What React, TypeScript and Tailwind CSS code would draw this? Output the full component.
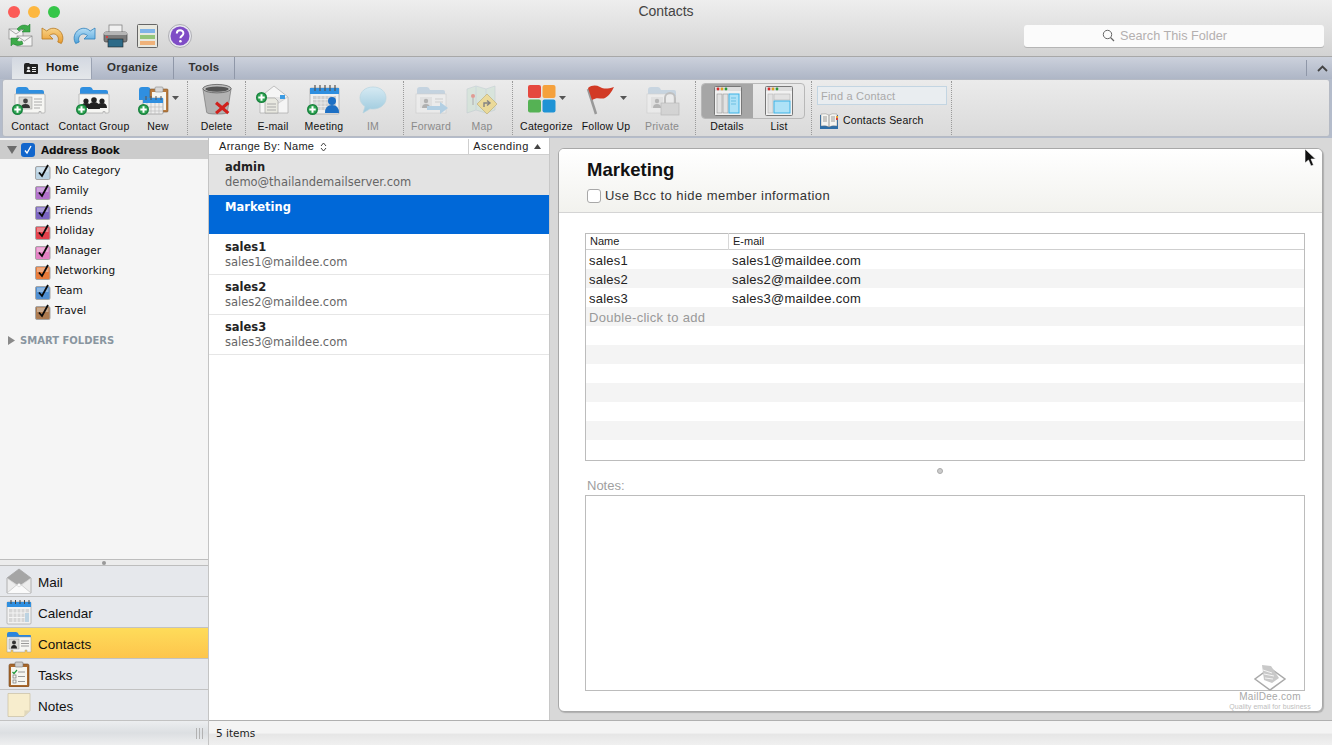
import React from "react";

const Plus = ({ x = 1, y = 21 }: { x?: number; y?: number }) => (
  <g transform={`translate(${x} ${y})`}>
    <circle cx="5.5" cy="5.5" r="5.5" fill="#17813d" />
    <circle cx="5.5" cy="5.5" r="4.2" fill="#2fa653" />
    <path d="M5.5 2.3v6.4M2.3 5.5h6.4" stroke="#fff" strokeWidth="2" />
  </g>
);

const Folder = ({ children }: { children?: React.ReactNode }) => (
  <>
    <path d="M4 6q0-3 3-3h7q2 0 3 3h13q2 0 2 2v4H4z" fill="#2f8fe0" />
    <path d="M3 10h29a1 1 0 0 1 1 1v17a1 1 0 0 1-1 1H29v-1.5h-2V29H10v-1.5H8V29H4a1 1 0 0 1-1-1V11a1 1 0 0 1 0-1z" fill="#f6f6f3" stroke="#a8a8a8" strokeWidth=".7" />
    {children}
  </>
);

const ContactIcon = () => (
  <svg width="36" height="32" viewBox="0 0 36 32">
    <Folder>
      <rect x="7" y="13" width="13" height="12" fill="#d8d8d4" stroke="#999" strokeWidth=".5" />
      <circle cx="13.5" cy="17" r="2.4" fill="#444" />
      <path d="M9 24q0-4 4.500-4t4.500 4z" fill="#333" />
      <path d="M22 15h8M22 18h8M22 21h8M22 24h6" stroke="#aaa" strokeWidth="1" />
    </Folder>
    <Plus x={0} y={20} />
  </svg>
);

const GroupIcon = () => (
  <svg width="36" height="32" viewBox="0 0 36 32">
    <Folder>
      <g fill="#222">
        <circle cx="10" cy="17" r="2.600" />
        <circle cx="18" cy="16" r="2.800" />
        <circle cx="26" cy="17" r="2.600" />
        <path d="M5 24q0-5 5-5t5 5zM12 25q0-7 6-7t6 7zM21 24q0-5 5-5t5 5z" />
      </g>
    </Folder>
    <Plus x={0} y={20} />
  </svg>
);

const NewIcon = () => (
  <svg width="32" height="32" viewBox="0 0 32 32">
    <path d="M1 6q0-3 3-3h6q2 0 3 3h6v10H1z" fill="#2f8fe0" />
    <rect x="12" y="5" width="18" height="23" rx="1" fill="#b97b3e" stroke="#80552a" strokeWidth=".6" />
    <rect x="14" y="8" width="14" height="18" fill="#f5f5f0" />
    <rect x="17" y="3" width="8" height="5" rx="1" fill="#d8d8d8" stroke="#888" strokeWidth=".6" />
    <rect x="5" y="14" width="20" height="16" rx="1" fill="#eeeeee" stroke="#888" strokeWidth=".6" />
    <rect x="5" y="14" width="20" height="5" fill="#2f8fe0" />
    <path d="M8 12v4M13 12v4M18 12v4M23 12v4" stroke="#555" strokeWidth="1" />
    <path d="M9 19v11M13 19v11M17 19v11M21 19v11M5 23h20M5 27h20" stroke="#bbb" strokeWidth=".7" />
    <Plus x={0} y={20} />
  </svg>
);

const TrashIcon = () => (
  <svg width="34" height="32" viewBox="0 0 34 34" className="-mt-[1px]">
    <defs>
      <pattern id="mesh" width="2" height="2" patternUnits="userSpaceOnUse">
        <rect width="2" height="2" fill="#f0f0f0" />
        <path d="M0 0l2 2M2 0L0 2" stroke="#555" strokeWidth=".4" />
      </pattern>
    </defs>
    <path d="M2 6l4 25q0 2 11 2t11-2l4-25z" fill="url(#mesh)" stroke="#666" strokeWidth=".6" />
    <ellipse cx="17" cy="6" rx="15" ry="4.500" fill="#bdbdbd" stroke="#555" strokeWidth=".8" />
    <ellipse cx="17" cy="6.500" rx="12.500" ry="2.800" fill="#555" />
    <path d="M16 21l13 11M29 21L16 32" stroke="#d0201c" strokeWidth="3.400" />
  </svg>
);

const EmailIcon = () => (
  <svg width="34" height="32" viewBox="0 0 34 32">
    <path d="M4 13L18 2l14 11v16H4z" fill="#f5f5f5" stroke="#aaa" strokeWidth=".7" />
    <path d="M4 13l14 9 14-9" fill="#e3e3e3" stroke="#bbb" strokeWidth=".5" />
    <rect x="24" y="11" width="5" height="4" fill="#3c9be2" />
    <path d="M9 14h10l3 3v12H9z" fill="#e8e8e0" stroke="#999" strokeWidth=".6" />
    <path d="M11 20h9M11 23h9M11 26h9" stroke="#aaa" strokeWidth="1" />
    <Plus x={0} y={8} />
  </svg>
);

const MeetingIcon = () => (
  <svg width="34" height="32" viewBox="0 0 34 32">
    <rect x="3" y="4" width="29" height="26" rx="1" fill="#f0f0f0" stroke="#999" strokeWidth=".6" />
    <rect x="3" y="4" width="29" height="6" fill="#2f8fe0" />
    <path d="M8 1v6M13 1v6M18 1v6M23 1v6M28 1v6" stroke="#555" strokeWidth="1.200" />
    <path d="M6 12h23v14H6z" fill="#cfcfcf" />
    <path d="M10 12v14M14 12v14M18 12v14M22 12v14M26 12v14M6 15.500h23M6 19h23M6 22.500h23" stroke="#eee" strokeWidth=".8" />
    <circle cx="25" cy="17" r="4" fill="#1d6fc4" />
    <path d="M18 29q0-8 7-8t7 8z" fill="#1d6fc4" />
    <Plus x={0} y={20} />
  </svg>
);

const ImIcon = () => (
  <svg width="30" height="32" viewBox="0 0 30 32">
    <defs>
      <linearGradient id="im" x1="0" y1="0" x2="0" y2="1">
        <stop offset="0" stopColor="#d6eaf3" />
        <stop offset="1" stopColor="#9cc9dd" />
      </linearGradient>
    </defs>
    <path d="M15 3c7.500 0 13 4.500 13 11s-6 11-13 11c-1 0-2 0-3-.2L5 29l2-6.500C4 20.500 2 17.500 2 14 2 7.500 7.500 3 15 3z" fill="url(#im)" stroke="#b8d4e0" strokeWidth=".7" />
  </svg>
);

const ForwardIcon = () => (
  <svg width="36" height="32" viewBox="0 0 36 32" opacity="0.55">
    <path d="M4 6q0-3 3-3h7q2 0 3 3h13q2 0 2 2v4H4z" fill="#a9c3da" />
    <rect x="3" y="10" width="30" height="19" fill="#f2f2f2" stroke="#bbb" strokeWidth=".6" />
    <rect x="7" y="13" width="12" height="11" fill="#ddd" />
    <circle cx="13" cy="17" r="2.200" fill="#888" />
    <path d="M9 24q0-4 4-4t4 4z" fill="#888" />
    <path d="M22 15h8M22 18h8" stroke="#bbb" />
    <path d="M14 26h13v-4l8 6-8 6v-4H14z" transform="translate(0 -4)" fill="#8cc0e4" />
  </svg>
);

const MapIcon = () => (
  <svg width="32" height="32" viewBox="0 0 32 32" opacity="0.6">
    <path d="M1 5l9-3 10 3 9-3v24l-9 3-10-3-9 3z" fill="#cfe3d5" stroke="#aebfc8" strokeWidth=".6" />
    <path d="M10 2v24M20 5v24" stroke="#b9cdd6" />
    <circle cx="7" cy="12" r="2" fill="#dd6a5e" />
    <path d="M7 14v7" stroke="#888" />
    <path d="M21 10l10 10-10 10-10-10z" fill="#f0d468" stroke="#a88f38" strokeWidth=".7" />
    <path d="M18 23v-4h5M21 16.500l3 2.500-3 2.500" fill="none" stroke="#444" strokeWidth="1.400" />
  </svg>
);

const CategorizeIcon = () => (
  <svg width="30" height="30" viewBox="0 0 30 30">
    <rect x="1" y="1" width="13" height="13" rx="2" fill="#e5483e" />
    <rect x="15.500" y="1" width="13" height="13" rx="2" fill="#f5a13d" />
    <rect x="1" y="15.500" width="13" height="13" rx="2" fill="#55b254" />
    <rect x="15.500" y="15.500" width="13" height="13" rx="2" fill="#1f93d5" />
  </svg>
);

const FlagIcon = () => (
  <svg width="32" height="32" viewBox="0 0 32 32">
    <path d="M2 5l8 25" stroke="#999" strokeWidth="2.500" />
    <path d="M2 4c4-3 8-3 12-1s7 2 14 0c-2 4-5 9-9 11s-7-2-13 2z" fill="#d23a25" />
  </svg>
);

const PrivateIcon = () => (
  <svg width="36" height="32" viewBox="0 0 36 32" opacity="0.5">
    <path d="M4 6q0-3 3-3h7q2 0 3 3h13q2 0 2 2v4H4z" fill="#a9c3da" />
    <rect x="3" y="10" width="27" height="19" fill="#f2f2f2" stroke="#bbb" strokeWidth=".6" />
    <rect x="7" y="13" width="12" height="11" fill="#ddd" />
    <circle cx="13" cy="17" r="2.200" fill="#888" />
    <path d="M9 24q0-4 4-4t4 4z" fill="#888" />
    <path d="M21 19v-5a5 5 0 0 1 10 0v5" fill="none" stroke="#999" strokeWidth="2" />
    <rect x="17" y="19" width="18" height="12" fill="#c7c7c7" stroke="#888" strokeWidth=".6" />
  </svg>
);

const WindowIcon = ({ list }: { list?: boolean }) => (
  <svg width="28" height="30" viewBox="0 0 28 30">
    <rect x=".5" y=".5" width="27" height="29" rx="1" fill="#f1f1f1" stroke="#777" />
    <rect x="1" y="1" width="26" height="4" fill="#ddd" />
    <circle cx="4" cy="3" r="1.400" fill="#d62a2a" />
    <circle cx="8" cy="3" r="1.400" fill="#e0a020" />
    <circle cx="12" cy="3" r="1.400" fill="#2a9a3a" />
    {list ? (
      <>
        <rect x="3" y="8" width="5" height="19" fill="#e2e2e2" stroke="#aaa" strokeWidth=".5" />
        <rect x="9" y="8" width="16" height="6" fill="#e2e2e2" stroke="#aaa" strokeWidth=".5" />
        <rect x="9" y="15" width="16" height="12" fill="#aee2f7" stroke="#3db2e6" />
      </>
    ) : (
      <>
        <rect x="3" y="8" width="5" height="19" fill="#e2e2e2" stroke="#888" strokeWidth=".5" />
        <rect x="9" y="8" width="5" height="19" fill="#e2e2e2" stroke="#888" strokeWidth=".5" />
        <rect x="15" y="8" width="10" height="19" fill="#aee2f7" stroke="#3db2e6" />
        <path d="M17 12h5M17 15h5M17 18h5" stroke="#6cbfe2" />
      </>
    )}
  </svg>
);

const BookIcon = () => (
  <svg width="20" height="16" viewBox="0 0 20 16">
    <path d="M1 2h18v14H1z" fill="#2d6ea8" />
    <path d="M2 1q5-1 8 1v12q-3-2-8-1zM18 1q-5-1-8 1v12q3-2 8-1z" fill="#f4f4f0" stroke="#777" strokeWidth=".4" />
    <path d="M4 4h4M4 6h4M4 8h4M12 4h4M12 6h4M12 8h4" stroke="#777" strokeWidth=".7" />
    <path d="M17 3h2v2h-2z" fill="#e8a030" />
    <path d="M17 5h2v2h-2z" fill="#d04040" />
  </svg>
);

const Caret = () => (
  <svg width="7" height="4" viewBox="0 0 7 4" className="shrink-0">
    <path d="M0 0h7L3.500 4z" fill="#555" />
  </svg>
);

const F = "font-['Liberation_Sans',sans-serif]";

type RibbonItem = { label: string; w: string; icon: React.ReactNode; muted?: boolean; caret?: boolean };

const RibbonButton = ({ label, w, icon, muted, caret }: RibbonItem) => (
  <div className={`${w} flex shrink-0 flex-col items-center`}>
    <div className="flex h-[38px] items-start justify-center gap-[2px] pt-[4px]">
      {icon}
      {caret && (
        <div className="mt-[12px]">
          <Caret />
        </div>
      )}
    </div>
    <div className={`mt-[1px] whitespace-nowrap text-[10.5px] leading-[14px] tracking-[0.2px] ${muted ? "text-[#8a8a8a]" : "text-[#111]"}`}>{label}</div>
  </div>
);

const Sep = ({ m = "" }: { m?: string }) => (
  <div className={`w-[1px] ${m} h-[54px] shrink-0 self-center border-l border-dotted border-[#9a9a9a]`} />
);

const cats = [
  ["No Category", "#b9d2e2"],
  ["Family", "#b272cb"],
  ["Friends", "#7b65c2"],
  ["Holiday", "#e5424c"],
  ["Manager", "#e481c4"],
  ["Networking", "#e97c3a"],
  ["Team", "#4e8fd3"],
  ["Travel", "#ad7b4f"],
] as const;

const CatCheck = ({ color }: { color: string }) => (
  <svg width="16" height="17" viewBox="0 0 16 17" className="shrink-0">
    <rect x=".5" y="3.500" width="14.500" height="13" rx="1.500" fill={color} stroke="#a5a5a5" />
    <rect x="2" y="4.500" width="11.500" height="4.500" fill="#fff" opacity=".35" />
    <path d="M4 9.500l3 3.500L13 2" fill="none" stroke="#0b0b0b" strokeWidth="1.800" />
  </svg>
);

const TriDown = () => (
  <svg width="10" height="8" viewBox="0 0 10 8">
    <path d="M0 0h10L5 8z" fill="#6c6c6c" />
  </svg>
);
const TriRight = () => (
  <svg width="7" height="9" viewBox="0 0 7 9">
    <path d="M0 0l7 4.500L0 9z" fill="#8a8a8a" />
  </svg>
);

const NavMail = () => (
  <svg width="26" height="26" viewBox="0 0 26 26">
    <path d="M1 10L13 1l12 9v15H1z" fill="#ececec" stroke="#999" strokeWidth=".7" />
    <path d="M1 10L13 1l12 9-12 8z" fill="#a5a5a5" />
    <path d="M1 25l12-10 12 10" fill="#fafafa" stroke="#bbb" strokeWidth=".6" />
    <path d="M1 10l12 9 12-9" fill="none" stroke="#ccc" strokeWidth=".6" />
  </svg>
);
const NavCal = () => (
  <svg width="26" height="26" viewBox="0 0 26 26">
    <rect x="1" y="3" width="24" height="22" rx="1" fill="#f2f2f2" stroke="#999" strokeWidth=".6" />
    <rect x="1" y="3" width="24" height="5" fill="#2f8fe0" />
    <path d="M5 1v4M9.500 1v4M14 1v4M18.500 1v4M23 1v4" stroke="#444" />
    <path d="M3 10h20v13H3z" fill="#d6d6d6" />
    <path d="M7 10v13M11 10v13M15 10v13M19 10v13M3 14h20M3 18.500h20" stroke="#f4f4f4" />
    <rect x="19" y="14" width="4" height="9" fill="#bcd3e2" />
  </svg>
);
const NavContact = () => (
  <svg width="26" height="26" viewBox="0 0 26 26">
    <path d="M1 4q0-2 2-2h7q2 0 3 3h11q1 0 1 1v3H1z" fill="#2a85dd" />
    <path d="M1 7h24v15h-4v-2h-2v2H7v-2H5v2H1z" fill="#f5f5f2" stroke="#999" strokeWidth=".5" />
    <rect x="3" y="9" width="10" height="10" fill="#d9d9d5" stroke="#888" strokeWidth=".4" />
    <circle cx="8" cy="12.500" r="2" fill="#333" />
    <path d="M5 18.500q0-3.500 3-3.500t3 3.500z" fill="#222" />
    <path d="M15 11h8M15 13.500h8M15 16h8" stroke="#999" />
  </svg>
);
const NavTasks = () => (
  <svg width="26" height="26" viewBox="0 0 26 26">
    <rect x="3" y="3" width="20" height="23" rx="1.500" fill="#a9682c" stroke="#6e4420" strokeWidth=".6" />
    <rect x="5" y="6" width="16" height="18" fill="#f6f6f0" />
    <rect x="9" y="1" width="8" height="5" rx="1" fill="#cfcfcf" stroke="#777" strokeWidth=".6" />
    <path d="M6.500 11l1.500 1.500L11 9" fill="none" stroke="#20983a" strokeWidth="1.200" />
    <rect x="7" y="14" width="3" height="3" fill="none" stroke="#777" strokeWidth=".7" />
    <rect x="7" y="19" width="3" height="3" fill="none" stroke="#777" strokeWidth=".7" />
    <path d="M12 11h7M12 15.500h7M12 20.500h7" stroke="#999" />
  </svg>
);
const NavNotes = () => (
  <svg width="26" height="26" viewBox="0 0 26 26">
    <path d="M2 1.500h22v17l-6 6H2z" fill="#f7edcd" stroke="#c8bfa2" strokeWidth=".7" />
    <path d="M24 18.500l-6 6q1-5 0-6z" fill="#e0d7ba" />
  </svg>
);

const nav = [
  ["Mail", <NavMail />],
  ["Calendar", <NavCal />],
  ["Contacts", <NavContact />],
  ["Tasks", <NavTasks />],
  ["Notes", <NavNotes />],
] as const;

const people = [
  ["sales1", "sales1@maildee.com"],
  ["sales2", "sales2@maildee.com"],
  ["sales3", "sales3@maildee.com"],
];

const LUCIDA = "font-['DejaVu_Sans',sans-serif]";

export default function App() {
  return (
    <div className={`relative flex h-[745px] w-[1332px] flex-col overflow-hidden bg-[#d8d8d8] ${F}`}>
      {/* Title bar */}
      <div className="h-[57px] shrink-0 border-b border-[#a8a8a8] bg-linear-to-b from-[#eeeeee] to-[#d3d3d3]">
        <div className="grid h-[23px] grid-cols-[1fr_auto_1fr] items-center">
          <div className="flex gap-[8px] pl-[8px]">
            <div className="h-[12px] w-[12px] rounded-full bg-[#fc5b57]" />
            <div className="h-[12px] w-[12px] rounded-full bg-[#fdb73f]" />
            <div className="h-[12px] w-[12px] rounded-full bg-[#35c649]" />
          </div>
          <div className="text-[14px] text-[#444]">Contacts</div>
          <div />
        </div>
        <div className="flex h-[25px] items-center justify-between pl-[8px] pr-[8px]">
          <div className="flex items-center gap-[7px]">
            <svg width="25" height="25" viewBox="0 0 25 25">
              <rect x="1" y="6" width="14" height="10" fill="#f4f4f4" stroke="#888" strokeWidth=".7" />
              <path d="M1 6l7 5 7-5" fill="none" stroke="#888" strokeWidth=".7" />
              <rect x="9" y="13" width="15" height="10" fill="#f4f4f4" stroke="#888" strokeWidth=".7" />
              <path d="M9 13l7.500 5 7.500-5" fill="none" stroke="#888" strokeWidth=".7" />
              <path d="M9 6q5-6 11-3l2-2v8h-8l2.500-2.500Q13 5 11 8z" fill="#3dab4a" stroke="#1f7d2e" strokeWidth=".5" />
              <path d="M15 21q-5 3-10 0l-2 2v-8h8l-2.500 2.500q3 1.500 5.500.5z" fill="#3dab4a" stroke="#1f7d2e" strokeWidth=".5" />
            </svg>
            <svg width="24" height="20" viewBox="0 0 24 20" className="ml-[1px]">
              <defs>
                <linearGradient id="und" x1="0" y1="0" x2="0" y2="1">
                  <stop offset="0" stopColor="#f8d48a" />
                  <stop offset="1" stopColor="#e99a2c" />
                </linearGradient>
              </defs>
              <path d="M1 2v11h11L8.500 9.500c3-2.500 7-2 8.500 1.500.6 1.500.5 3-.2 5l3.500 1.500c2.500-4 2-9-1.500-12.500C14.800 1.200 9.300 1.500 5.800 5z" fill="url(#und)" stroke="#b87820" strokeWidth=".8" />
            </svg>
            <svg width="24" height="20" viewBox="0 0 24 20">
              <defs>
                <linearGradient id="red" x1="0" y1="0" x2="0" y2="1">
                  <stop offset="0" stopColor="#b7def5" />
                  <stop offset="1" stopColor="#4fa3dc" />
                </linearGradient>
              </defs>
              <path d="M23 2v11H12l3.500-3.500c-3-2.500-7-2-8.500 1.500-.6 1.500-.5 3 .2 5l-3.500 1.500c-2.500-4-2-9 1.500-12.500C9.200 1.200 14.700 1.500 18.200 5z" fill="url(#red)" stroke="#2c7fbb" strokeWidth=".8" />
            </svg>
            <svg width="25" height="24" viewBox="0 0 25 24">
              <rect x="6" y="1" width="13" height="8" fill="#f1f1f1" stroke="#777" strokeWidth=".7" />
              <rect x="1" y="8" width="23" height="10" rx="2" fill="#7b7b7b" stroke="#444" strokeWidth=".7" />
              <rect x="1" y="8" width="23" height="3" rx="1" fill="#b5b5b5" />
              <circle cx="4" cy="13" r="1" fill="#e33" />
              <rect x="5" y="15" width="15" height="8" fill="#2d6a88" stroke="#222" strokeWidth=".6" />
            </svg>
            <svg width="21" height="24" viewBox="0 0 21 24" className="mx-[2px]">
              <rect x=".5" y=".5" width="20" height="23" rx="1" fill="#e8e8e0" stroke="#666" />
              <rect x="3" y="5" width="15" height="4" fill="#7fb4e8" />
              <rect x="3" y="11" width="15" height="4" fill="#93c57a" />
              <rect x="3" y="17" width="15" height="4" fill="#efb27a" />
            </svg>
            <svg width="24" height="24" viewBox="0 0 24 24" className="ml-[1px]">
              <circle cx="12" cy="12" r="11.500" fill="#e8e8ee" stroke="#8a8a90" strokeWidth=".6" />
              <circle cx="12" cy="12" r="9.500" fill="#7f4cc6" />
              <path d="M8.800 9.500c0-4.500 6.600-4.300 6.600-.3 0 2.800-3 2.500-3 5" fill="none" stroke="#fff" strokeWidth="2" />
              <circle cx="12.400" cy="17.300" r="1.300" fill="#fff" />
            </svg>
          </div>
          <div className="flex h-[22px] w-[300px] items-center justify-center gap-[5px] rounded-[3px] bg-[#fbfbfb] pr-[19px] shadow-[0_1px_0_#b5b5b5]">
            <svg width="13" height="13" viewBox="0 0 13 13">
              <circle cx="5.500" cy="5.500" r="4.200" fill="none" stroke="#666" strokeWidth="1" />
              <path d="M8.500 8.500L12 12" stroke="#666" strokeWidth="1.200" />
            </svg>
            <span className="pt-[2px] text-[12.7px] text-[#b4b0b0]">Search This Folder</span>
          </div>
        </div>
      </div>

      {/* Tabs */}
      <div className="flex h-[22px] shrink-0 items-stretch bg-linear-to-b from-[#ccd1dc] to-[#aeb6c6] pl-[12px]">
        <div className="flex w-[80px] items-center justify-center gap-[8px] rounded-t-[2px] border-r border-[#9aa2b2] bg-linear-to-b from-[#d3d8e1] to-[#e4e7ea]">
          <svg width="14" height="11" viewBox="0 0 14 11">
            <path d="M0 2q0-2 2-2h3l1 1h7a1 1 0 0 1 1 1v8a1 1 0 0 1-1 1H1a1 1 0 0 1-1-1z" fill="#222" />
            <circle cx="4.500" cy="5" r="1.300" fill="#eee" />
            <path d="M2.500 9q0-2.500 2-2.500t2 2.500z" fill="#eee" />
            <path d="M8 4.500h4M8 6.500h4M8 8.500h4" stroke="#eee" />
          </svg>
          <span className="text-[11.5px] font-bold tracking-[0.3px] text-[#222]">Home</span>
        </div>
        <div className="flex w-[82px] items-center justify-center border-r border-[#8f97a8] text-[11.5px] font-bold tracking-[0.2px] text-[#333]">Organize</div>
        <div className="flex w-[61px] items-center justify-center border-r border-[#8f97a8] text-[11.5px] font-bold tracking-[0.2px] text-[#333]">Tools</div>
        <div className="flex-1" />
        <div className="my-[3px] w-[14px] border-l border-[#8f97a8]" />
        <div className="flex w-[12px] items-center">
          <svg width="11" height="7" viewBox="0 0 11 7" className="-ml-[3px]">
            <path d="M1 6l4.500-4.500L10 6" fill="none" stroke="#444" strokeWidth="1.800" />
          </svg>
        </div>
      </div>

      {/* Ribbon */}
      <div className="h-[59px] shrink-0 bg-[#b4bccb] px-[2px] pb-[1px]">
        <div className="flex h-[58px] items-start rounded-[3px] border border-[#b5bac4] bg-linear-to-b from-[#ebebeb] to-[#dadada] pl-[1px]">
          <RibbonButton label="Contact" w="w-[52px]" icon={<ContactIcon />} />
          <RibbonButton label="Contact Group" w="w-[76px]" icon={<GroupIcon />} />
          <RibbonButton label="New" w="w-[52px]" icon={<NewIcon />} caret />
          <Sep m="ml-[3px]" />
          <RibbonButton label="Delete" w="w-[57px]" icon={<TrashIcon />} />
          <Sep />
          <RibbonButton label="E-mail" w="w-[54px]" icon={<EmailIcon />} />
          <RibbonButton label="Meeting" w="w-[48px]" icon={<MeetingIcon />} />
          <RibbonButton label="IM" w="w-[50px]" icon={<ImIcon />} muted />
          <Sep m="ml-[5px]" />
          <RibbonButton label="Forward" w="w-[54px]" icon={<ForwardIcon />} muted />
          <RibbonButton label="Map" w="w-[48px]" icon={<MapIcon />} muted />
          <Sep m="ml-[6px]" />
          <RibbonButton label="Categorize" w="w-[67px]" icon={<CategorizeIcon />} caret />
          <RibbonButton label="Follow Up" w="w-[52px]" icon={<FlagIcon />} caret />
          <RibbonButton label="Private" w="w-[60px]" icon={<PrivateIcon />} muted />
          <Sep m="ml-[3px]" />
          <div className="ml-[5px] shrink-0">
            <div className="mt-[3px] flex h-[36px] w-[104px] rounded-[4px] border border-[#b8b8b8]">
              <div className="flex w-[52px] items-center justify-center rounded-l-[3px] bg-[#a6a6a6]">
                <WindowIcon />
              </div>
              <div className="flex w-[52px] items-center justify-center">
                <WindowIcon list />
              </div>
            </div>
            <div className="flex text-[10.5px] leading-[14px] tracking-[0.2px] text-[#111]">
              <div className="w-[52px] text-center">Details</div>
              <div className="w-[52px] text-center">List</div>
            </div>
          </div>
          <Sep m="ml-[6px]" />
          <div className="ml-[5px] w-[130px] shrink-0 pt-[6px]">
            <div className="flex h-[19px] items-center border border-[#c3d5e2] bg-[#e9edf0] pl-[3px] pt-[2px] text-[11px] tracking-[0.2px] text-[#a9a9a9]">Find a Contact</div>
            <div className="mt-[8px] flex items-center gap-[4px] pl-[2px] text-[10.5px] tracking-[0.2px] text-[#111]">
              <BookIcon />
              <span>Contacts Search</span>
            </div>
          </div>
          <Sep m="ml-[4px]" />
        </div>
      </div>

      {/* Main */}
      <div className="flex min-h-0 flex-1 bg-[#d8d8d8]">
        {/* Sidebar */}
        <div className="flex w-[209px] shrink-0 flex-col border-r border-[#c4c4c4] bg-[#f5f5f5]">
          <div className="mt-[2px] flex h-[19px] items-center bg-[#cccccc] pl-[7px]">
            <TriDown />
            <div className="ml-[4px] flex h-[14px] w-[14px] items-center justify-center rounded-[3px] bg-[#1266cc]">
              <svg width="10" height="10" viewBox="0 0 10 10">
                <path d="M2 5.500L4 8l4-7" fill="none" stroke="#fff" strokeWidth="1.300" />
              </svg>
            </div>
            <span className={`ml-[6px] pt-[2px] text-[10.5px] font-bold tracking-[-0.2px] text-[#111] ${LUCIDA}`}>Address Book</span>
          </div>
          <div className="flex flex-col pl-[35px] pt-[2px]">
            {cats.map(([n, c]) => (
              <div key={n} className="flex h-[20px] items-center gap-[4px]">
                <CatCheck color={c} />
                <span className={`text-[10.5px] text-[#111] ${LUCIDA}`}>{n}</span>
              </div>
            ))}
          </div>
          <div className="mt-[9px] flex h-[20px] items-center gap-[5px] pl-[8px]">
            <TriRight />
            <span className={`text-[10px] font-bold text-[#8995a0] ${LUCIDA}`}>SMART FOLDERS</span>
          </div>
          <div className="flex-1" />
          <div className="flex h-[7px] items-center justify-center border-y border-[#bdbdbd] bg-[#ececec]">
            <div className="h-[4px] w-[4px] rounded-full bg-[#999]" />
          </div>
          {nav.map(([n, icon], i) => (
            <div
              key={n}
              className={`flex h-[31px] items-center gap-[6px] border-b border-[#c2c2c2] pl-[6px] text-[13.5px] text-[#111] ${
                i === 2 ? "bg-linear-to-b from-[#fedc5a] to-[#fdc54c]" : "bg-[#e6e8ec]"
              }`}
            >
              {icon}
              <span className="pt-[4px]">{n}</span>
            </div>
          ))}
          <div className="flex h-[24px] shrink-0 items-center justify-end bg-linear-to-b from-[#eceef0] via-[#dcdfe2] to-[#eeeff0] pr-[5px]">
            <div className="h-[11px] w-[7px] border-x border-[#b2b2b2] bg-[linear-gradient(90deg,transparent_40%,#b2b2b2_40%,#b2b2b2_60%,transparent_60%)]" />
          </div>
        </div>

        {/* Right */}
        <div className="flex min-w-0 flex-1 flex-col">
          <div className="flex min-h-0 flex-1">
            {/* List */}
            <div className="flex w-[341px] shrink-0 flex-col border-r border-[#c8c8c8] bg-white">
              <div className="mt-[1px] flex h-[16px] items-center border-b border-[#cfcfcf] bg-white pl-[10px] text-[11px] tracking-[0.3px] text-[#222]">
                <span>Arrange By: Name</span>
                <svg width="7" height="10" viewBox="0 0 7 10" className="ml-[6px]">
                  <path d="M1 4l2.500-3L6 4M1 6l2.500 3L6 6" fill="none" stroke="#444" />
                </svg>
                <div className="ml-[141px] flex h-full items-center border-l border-[#cfcfcf] pl-[4px] tracking-[0.45px]">
                  <span>Ascending</span>
                  <svg width="7" height="5" viewBox="0 0 7 5" className="ml-[5px]">
                    <path d="M0 5h7L3.500 0z" fill="#444" />
                  </svg>
                </div>
              </div>
              <div className={`h-[40px] bg-[#e3e3e3] pl-[16px] pt-[5px] text-[11.5px] leading-[15px] ${LUCIDA}`}>
                <div className="font-bold text-[#222]">admin</div>
                <div className="text-[#666]">demo@thailandemailserver.com</div>
              </div>
              <div className={`mb-[1px] h-[39px] bg-[#0068d8] pl-[16px] pt-[5px] text-[11.5px] font-bold leading-[15px] text-white ${LUCIDA}`}>Marketing</div>
              {people.map(([n, e]) => (
                <div key={n} className={`h-[40px] border-b border-[#e6e6e6] pl-[16px] pt-[5px] text-[11.5px] leading-[15px] ${LUCIDA}`}>
                  <div className="font-bold text-[#222]">{n}</div>
                  <div className="text-[#666]">{e}</div>
                </div>
              ))}
            </div>

            {/* Detail */}
            <div className="relative min-w-0 flex-1 pb-[8px] pl-[8px] pr-[9px] pt-[10px]">
              <div className="flex h-full flex-col overflow-hidden rounded-[6px] border border-[#a8a8a8] bg-white shadow-[1px_1px_1px_#b0b0b0]">
                <div className="h-[64px] shrink-0 border-b border-[#d4d4d4] bg-linear-to-b from-white to-[#f2f2ee] pl-[28px] pt-[9px]">
                  <div className="text-[18.5px] font-bold leading-[24px] text-[#111]">Marketing</div>
                  <div className="mt-[4px] flex items-center gap-[4px]">
                    <div className="h-[14px] w-[14px] rounded-[3px] border border-[#a8a8a8] bg-white" />
                    <span className="text-[13px] tracking-[0.44px] text-[#333]">Use Bcc to hide member information</span>
                  </div>
                </div>
                <div className="flex min-h-0 flex-1 flex-col pl-[26px] pr-[17px] pt-[20px]">
                  <div className="h-[228px] shrink-0 border border-[#bcbcbc]">
                    <div className="flex h-[16px] items-center border-b border-[#cfcfcf] text-[11px] text-[#222]">
                      <div className="w-[143px] border-r border-[#d8d8d8] pl-[4px]">Name</div>
                      <div className="pl-[4px]">E-mail</div>
                    </div>
                    {Array.from({ length: 11 }).map((_, i) => {
                      const p = people[i];
                      return (
                        <div key={i} className={`flex h-[19px] items-center pt-[2px] text-[13px] tracking-[0.25px] text-[#222] ${i % 2 ? "bg-[#f4f4f4]" : "bg-white"}`}>
                          {p ? (
                            <>
                              <div className="w-[143px] pl-[3px]">{p[0]}</div>
                              <div className="pl-[3px]">{p[1]}</div>
                            </>
                          ) : i === 3 ? (
                            <div className="pl-[3px] tracking-[0.3px] text-[#999]">Double-click to add</div>
                          ) : null}
                        </div>
                      );
                    })}
                  </div>
                  <div className="flex h-[19px] shrink-0 items-center justify-center pr-[10px]">
                    <div className="h-[6px] w-[6px] rounded-full border border-[#aaa] bg-[#ccc]" />
                  </div>
                  <div className="h-[15px] shrink-0 pl-[2px] text-[13px] leading-[11px] text-[#a0a0a0]">Notes:</div>
                  <div className="relative h-[196px] shrink-0 border border-[#bcbcbc]">
                    <div className="absolute -bottom-[21px] -right-[8px] flex w-[84px] flex-col items-center">
                      <svg width="34" height="27" viewBox="0 0 34 27">
                        <path d="M17 4l15 11-15 11L2 15z" fill="#fff" stroke="#aaa" strokeWidth="1.500" />
                        <path d="M9 1l9 1 8 12-7 5-8-3z" fill="#c9c9c9" />
                        <path d="M10 6l9 3M11 10l10 2M12 14l8 1" stroke="#f4f4f4" />
                      </svg>
                      <div className="text-[10px] leading-[12px] tracking-[0.3px] text-[#a8a8a8]">MailDee.com</div>
                      <div className="-mt-[1px] whitespace-nowrap text-[7px] leading-[9px] tracking-[0.05px] text-[#bdbdbd]">Quality email for business</div>
                    </div>
                  </div>
                </div>
              </div>
            </div>
          </div>
          <div className={`flex h-[25px] shrink-0 items-center border-t border-[#b0b0b0] bg-[linear-gradient(#f4f4f4_50%,#e6e6e6_55%,#f0f0f0)] pl-[7px] pt-[1px] text-[10.5px] text-[#222] ${LUCIDA}`}>5 items</div>
        </div>
      </div>

      {/* Mouse pointer */}
      <svg width="12" height="18" viewBox="0 0 12 18" className="absolute left-[1304px] top-[149px]">
        <path d="M1 0v14l3.500-3 2.500 6 2.500-1-2.500-6h4.500z" fill="#111" stroke="#fff" strokeWidth=".6" />
      </svg>
    </div>
  );
}
